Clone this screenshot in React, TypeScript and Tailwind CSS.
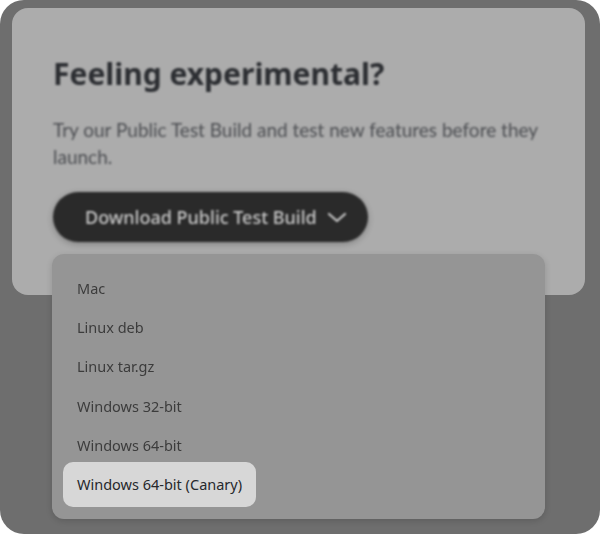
const builds = ["Mac", "Linux deb", "Linux tar.gz", "Windows 32-bit", "Windows 64-bit"];

export default function App() {
  return (
    <div className="h-[534px] w-[600px] bg-white font-['Noto_Sans',sans-serif]">
      <div className="h-full overflow-hidden rounded-[24px] bg-[#6e6e6e] pl-[12px] pr-[15px] pt-[8px]">
        <section className="relative h-[287px] rounded-[16px] bg-[#acacac]">
          {/* dimmed page content */}
          <div className="px-[41px] pt-[47px] blur-[0.8px]">
            <h2 className="text-[30px] font-bold leading-[38px] text-[#2c2e32]">Feeling experimental?</h2>
            <p className="mt-[23px] font-['Lato',sans-serif] text-[19px] leading-[27px] text-[#4c4e52]">
              Try our Public Test Build and test new features before they launch.
            </p>
            <button className="mt-[22px] flex h-[50px] w-[315px] items-center gap-[10px] rounded-full bg-[#2a2a2a] pl-[32px] text-[18px] font-medium text-[#c8c8c8] shadow-[0_2px_6px_rgba(0,0,0,0.25)]">
              Download Public Test Build
              <svg width="20" height="11" viewBox="0 0 20 11" fill="none" stroke="currentColor" strokeWidth="2.2" strokeLinecap="round" strokeLinejoin="round">
                <path d="M2 2l8 7 8-7" />
              </svg>
            </button>
          </div>

          {/* open menu */}
          <div className="absolute left-[40px] top-[246px] flex w-[493px] flex-col rounded-[12px] bg-[#959595] py-[15px] shadow-[0_2px_6px_rgba(0,0,0,0.15)]">
            {builds.map((b) => (
              <div key={b} className="flex h-[39.3px] items-center pl-[25px] text-[14.5px] text-[#3c3c3c] blur-[0.7px]">
                {b}
              </div>
            ))}
            <div className="-my-[3px] ml-[11px] flex h-[45px] w-fit items-center rounded-[10px] bg-[#d7d7d7] px-[14px] text-[14.5px] text-[#26282c]">
              Windows 64-bit (Canary)
            </div>
          </div>
        </section>
      </div>
    </div>
  );
}
